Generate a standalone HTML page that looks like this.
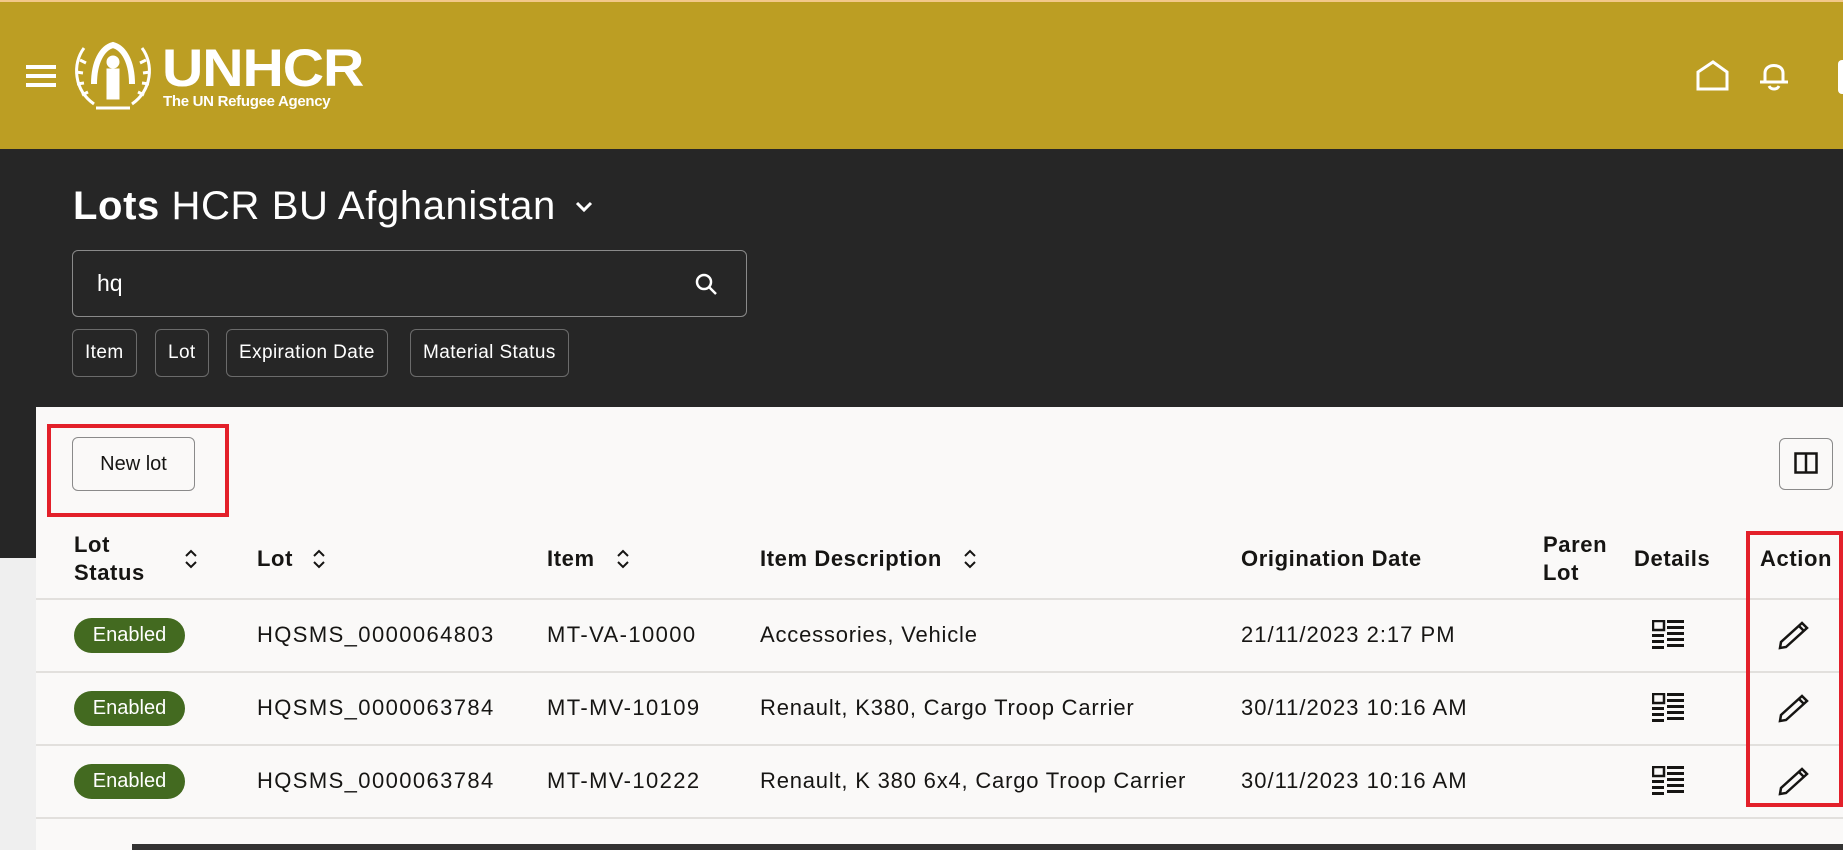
<!DOCTYPE html>
<html><head><meta charset="utf-8"><style>
*{margin:0;padding:0;box-sizing:border-box}
body{width:1843px;height:850px;overflow:hidden;background:#262626;font-family:"Liberation Sans",sans-serif;position:relative}
.abs{position:absolute}
.gold{left:0;top:0;width:1843px;height:149px;background:#bc9e23;border-top:2px solid #f2c88a}
.txt{color:#161513;font-size:22px;letter-spacing:1.4px;white-space:nowrap}
.hd{font-weight:bold;font-size:22px;letter-spacing:0.6px;color:#161513;white-space:nowrap;line-height:28px}
.line{left:36px;width:1807px;height:2px;background:#e2e0dd}
.chip{top:329px;height:48px;border:1px solid #6b6b6b;border-radius:6px;color:#fff;font-size:19px;letter-spacing:0.4px;line-height:46px;padding:0 12px}
.badge{left:74px;width:111px;height:35px;border-radius:18px;background:#436a20;color:#fff;font-size:20px;text-align:center;line-height:35px}
</style></head><body>
<div class="abs gold"></div>
<div class="abs" style="left:26px;top:65px;width:30px;height:4px;background:#fff"></div>
<div class="abs" style="left:26px;top:74px;width:30px;height:4px;background:#fff"></div>
<div class="abs" style="left:26px;top:83px;width:30px;height:4px;background:#fff"></div>
<svg class="abs" style="left:70px;top:40px" width="86" height="72" viewBox="0 0 86 72" fill="none" stroke="#fff" stroke-width="3">
<path d="M14 8 C2 24 4 50 24 64"/><path d="M72 8 C84 24 82 50 62 64"/>
<path d="M10 20 l6 3 M6 32 l7 1 M7 44 l7 -1 M12 55 l6 -3"/><path d="M76 20 l-6 3 M80 32 l-7 1 M79 44 l-7 -1 M74 55 l-6 -3"/>
<path d="M24 44 C24 22 32 8 43 5 C54 8 62 22 62 44" stroke-width="6"/>
<circle cx="43" cy="22" r="5" fill="#fff"/><path d="M38 30 h10 v28 h-10z" fill="#fff"/>
<path d="M26 68 L60 68"/>
</svg>
<div class="abs" style="left:162px;top:40px;color:#fff;font-weight:bold;font-size:53px;letter-spacing:-1px;line-height:58px;transform:scaleX(1.08);transform-origin:left">UNHCR</div>
<div class="abs" style="left:163px;top:93px;color:#fff;font-weight:bold;font-size:15px;letter-spacing:-0.3px">The UN Refugee Agency</div>
<svg class="abs" style="left:1696px;top:60px" width="34" height="31" viewBox="0 0 34 31" fill="none" stroke="#fff" stroke-width="3"><path d="M2 29 V12 L17 2 L31 12 V29 Z"/></svg>
<svg class="abs" style="left:1758px;top:60px" width="32" height="31" viewBox="0 0 32 31" fill="none" stroke="#fff" stroke-width="3"><path d="M7 22 V13 C7 3 25 3 25 13 V22 M2 22 H30 M11 26 C13 30 19 30 21 26"/></svg>
<div class="abs" style="left:1838px;top:60px;width:10px;height:34px;background:#fff;border-radius:4px"></div>
<div class="abs" style="left:73px;top:182px;color:#fff;font-size:40px;letter-spacing:0.6px;line-height:48px;white-space:nowrap"><b>Lots</b> HCR BU Afghanistan</div>
<svg class="abs" style="left:574px;top:199px" width="20" height="14" viewBox="0 0 20 14" fill="none" stroke="#fff" stroke-width="3"><path d="M3 4 L10 11 L17 4"/></svg>
<div class="abs" style="left:72px;top:250px;width:675px;height:67px;border:1px solid #8a8a8a;border-radius:6px"></div>
<div class="abs" style="left:97px;top:270px;color:#fff;font-size:23px">hq</div>
<svg class="abs" style="left:694px;top:272px" width="24" height="24" viewBox="0 0 24 24" fill="none" stroke="#fff" stroke-width="2.5"><circle cx="10" cy="10" r="7"/><path d="M15 15 L22 22"/></svg>
<div class="abs chip" style="left:72px">Item</div>
<div class="abs chip" style="left:155px">Lot</div>
<div class="abs chip" style="left:226px">Expiration Date</div>
<div class="abs chip" style="left:410px">Material Status</div>
<div class="abs" style="left:0;top:558px;width:36px;height:292px;background:#efefef"></div>
<div class="abs" style="left:36px;top:407px;width:1807px;height:437px;background:#faf9f8"></div>
<div class="abs" style="left:36px;top:844px;width:96px;height:6px;background:#faf9f8"></div>
<div class="abs" style="left:132px;top:844px;width:1711px;height:6px;background:#333"></div>
<div class="abs" style="left:72px;top:437px;width:123px;height:54px;border:1px solid #8a8a8a;border-radius:6px;font-size:20px;text-align:center;line-height:52px;color:#161513">New lot</div>
<div class="abs" style="left:47px;top:424px;width:182px;height:93px;border:4px solid #e3202a"></div>
<div class="abs" style="left:1779px;top:438px;width:54px;height:52px;border:1px solid #8a8a8a;border-radius:6px"></div>
<svg class="abs" style="left:1794px;top:452px" width="24" height="22" viewBox="0 0 24 22" fill="none" stroke="#161513" stroke-width="2.5"><rect x="1.5" y="1.5" width="21" height="19"/><path d="M12 1 V21"/></svg>
<div class="abs hd" style="left:74px;top:531px">Lot<br>Status</div>
<div class="abs hd" style="left:257px;top:545px">Lot</div>
<div class="abs hd" style="left:547px;top:545px">Item</div>
<div class="abs hd" style="left:760px;top:545px">Item Description</div>
<div class="abs hd" style="left:1241px;top:545px">Origination Date</div>
<div class="abs hd" style="left:1543px;top:531px">Paren<br>Lot</div>
<div class="abs hd" style="left:1634px;top:545px">Details</div>
<div class="abs hd" style="left:1760px;top:545px">Action</div>
<svg class="abs" style="left:183px;top:548px" width="16" height="22" viewBox="0 0 16 22" fill="none" stroke="#161513" stroke-width="2"><path d="M3 8 L8 3 L13 8 M3 14 L8 19 L13 14"/></svg>
<svg class="abs" style="left:311px;top:548px" width="16" height="22" viewBox="0 0 16 22" fill="none" stroke="#161513" stroke-width="2"><path d="M3 8 L8 3 L13 8 M3 14 L8 19 L13 14"/></svg>
<svg class="abs" style="left:615px;top:548px" width="16" height="22" viewBox="0 0 16 22" fill="none" stroke="#161513" stroke-width="2"><path d="M3 8 L8 3 L13 8 M3 14 L8 19 L13 14"/></svg>
<svg class="abs" style="left:962px;top:548px" width="16" height="22" viewBox="0 0 16 22" fill="none" stroke="#161513" stroke-width="2"><path d="M3 8 L8 3 L13 8 M3 14 L8 19 L13 14"/></svg>
<div class="abs line" style="top:598px"></div>
<div class="abs line" style="top:671px"></div>
<div class="abs line" style="top:744px"></div>
<div class="abs line" style="top:817px"></div>
<div class="abs badge" style="top:618px">Enabled</div>
<div class="abs badge" style="top:691px">Enabled</div>
<div class="abs badge" style="top:764px">Enabled</div>
<div class="abs txt" style="left:257px;top:622px">HQSMS_0000064803</div>
<div class="abs txt" style="left:257px;top:695px">HQSMS_0000063784</div>
<div class="abs txt" style="left:257px;top:768px">HQSMS_0000063784</div>
<div class="abs txt" style="left:547px;top:622px">MT-VA-10000</div>
<div class="abs txt" style="left:547px;top:695px">MT-MV-10109</div>
<div class="abs txt" style="left:547px;top:768px">MT-MV-10222</div>
<div class="abs txt" style="left:760px;top:622px;letter-spacing:0.8px">Accessories, Vehicle</div>
<div class="abs txt" style="left:760px;top:695px;letter-spacing:0.8px">Renault, K380, Cargo Troop Carrier</div>
<div class="abs txt" style="left:760px;top:768px;letter-spacing:0.8px">Renault, K 380 6x4, Cargo Troop Carrier</div>
<div class="abs txt" style="left:1241px;top:622px;letter-spacing:1px">21/11/2023 2:17 PM</div>
<div class="abs txt" style="left:1241px;top:695px;letter-spacing:1px">30/11/2023 10:16 AM</div>
<div class="abs txt" style="left:1241px;top:768px;letter-spacing:1px">30/11/2023 10:16 AM</div>
<svg class="abs" style="left:1652px;top:620px" width="32" height="30" viewBox="0 0 32 30" fill="#161513"><rect x="1" y="1" width="11" height="9" fill="none" stroke="#161513" stroke-width="2.5"/><rect x="0" y="14" width="12" height="3"/><rect x="0" y="20" width="12" height="3"/><rect x="0" y="26" width="12" height="3"/><rect x="15" y="0" width="17" height="3"/><rect x="15" y="6" width="17" height="3"/><rect x="15" y="12" width="17" height="3"/><rect x="15" y="18" width="17" height="3"/><rect x="15" y="24" width="17" height="3"/></svg>
<svg class="abs" style="left:1652px;top:693px" width="32" height="30" viewBox="0 0 32 30" fill="#161513"><rect x="1" y="1" width="11" height="9" fill="none" stroke="#161513" stroke-width="2.5"/><rect x="0" y="14" width="12" height="3"/><rect x="0" y="20" width="12" height="3"/><rect x="0" y="26" width="12" height="3"/><rect x="15" y="0" width="17" height="3"/><rect x="15" y="6" width="17" height="3"/><rect x="15" y="12" width="17" height="3"/><rect x="15" y="18" width="17" height="3"/><rect x="15" y="24" width="17" height="3"/></svg>
<svg class="abs" style="left:1652px;top:766px" width="32" height="30" viewBox="0 0 32 30" fill="#161513"><rect x="1" y="1" width="11" height="9" fill="none" stroke="#161513" stroke-width="2.5"/><rect x="0" y="14" width="12" height="3"/><rect x="0" y="20" width="12" height="3"/><rect x="0" y="26" width="12" height="3"/><rect x="15" y="0" width="17" height="3"/><rect x="15" y="6" width="17" height="3"/><rect x="15" y="12" width="17" height="3"/><rect x="15" y="18" width="17" height="3"/><rect x="15" y="24" width="17" height="3"/></svg>
<svg class="abs" style="left:1778px;top:620px" width="32" height="30" viewBox="0 0 32 30" fill="none" stroke="#161513" stroke-width="2.5"><path d="M2 28 L3 22 L24 3 L29 8 L8 27 Z M21 6 L26 11"/></svg>
<svg class="abs" style="left:1778px;top:693px" width="32" height="30" viewBox="0 0 32 30" fill="none" stroke="#161513" stroke-width="2.5"><path d="M2 28 L3 22 L24 3 L29 8 L8 27 Z M21 6 L26 11"/></svg>
<svg class="abs" style="left:1778px;top:766px" width="32" height="30" viewBox="0 0 32 30" fill="none" stroke="#161513" stroke-width="2.5"><path d="M2 28 L3 22 L24 3 L29 8 L8 27 Z M21 6 L26 11"/></svg>
<div class="abs" style="left:1746px;top:531px;width:97px;height:276px;border:4px solid #e3202a;border-right:none"></div>
<div class="abs" style="left:1839px;top:531px;width:4px;height:276px;background:#e3202a"></div>
</body></html>
